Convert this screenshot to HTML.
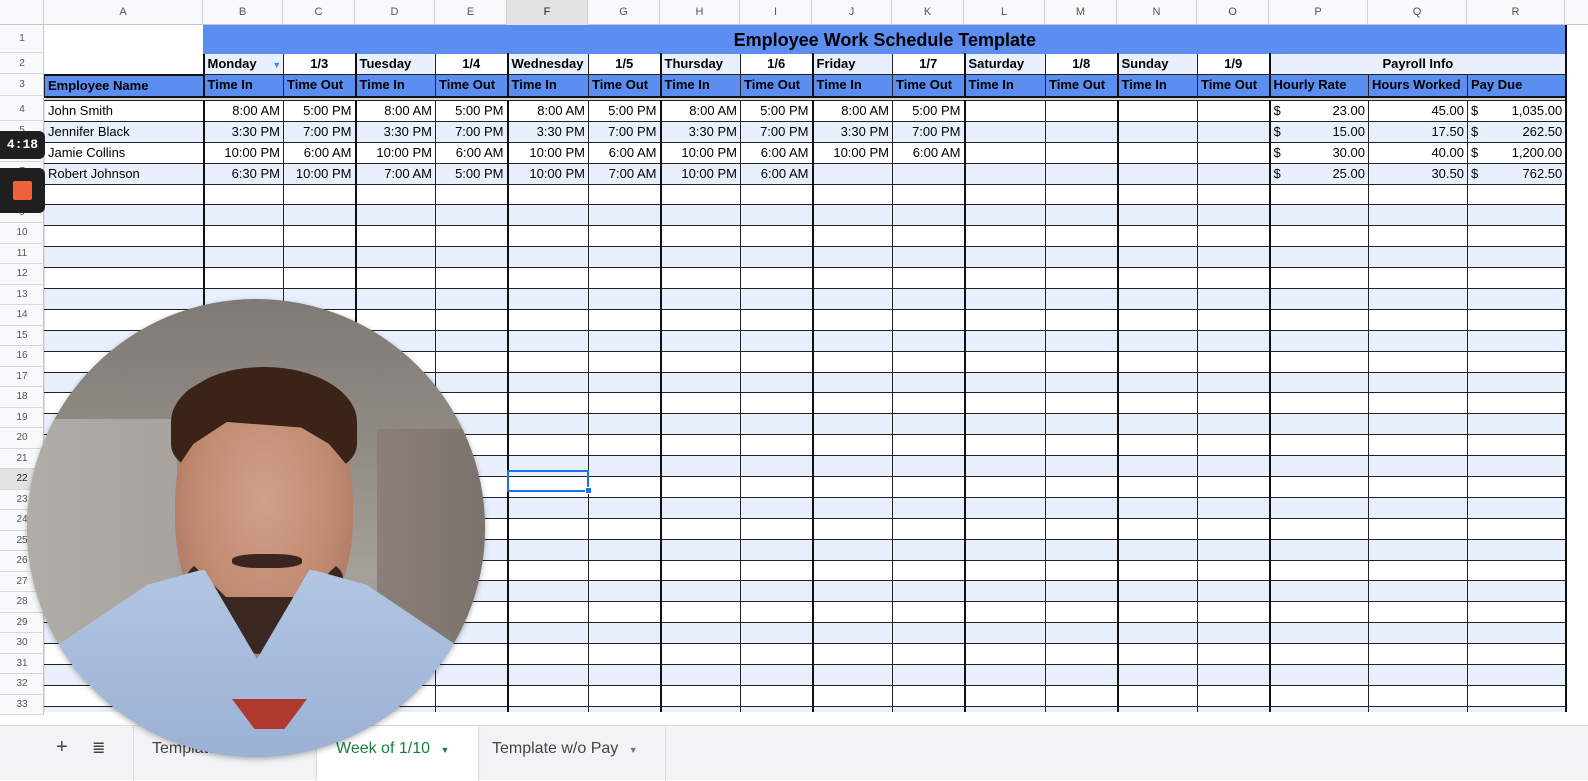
<!DOCTYPE html>
<html><head><meta charset="utf-8"><style>
*{box-sizing:border-box;margin:0;padding:0}
body{width:1588px;height:780px;overflow:hidden;background:#fff;font-family:"Liberation Sans",Arial,sans-serif;position:relative}
#colh{position:absolute;left:0;top:0;height:25px;width:1588px;background:#f8f9fa;border-bottom:1px solid #c7c7c7}
#colh div{position:absolute;top:0;height:25px;line-height:25px;text-align:center;font-size:11px;color:#555;border-right:1px solid #d0d0d0}
#rowh{position:absolute;left:0;top:25px;width:44px;height:690px;background:#f8f9fa;border-right:1px solid #c7c7c7}
#rowh div{position:absolute;left:0;width:44px;text-align:center;font-size:10px;color:#555;border-bottom:1px solid #d8d8d8}
table{position:absolute;left:44px;top:25px;width:1521px;border-collapse:collapse;table-layout:fixed;font-size:13px}
td{border:1px solid #222;padding:0 3px;white-space:nowrap;overflow:hidden;height:20.9px;line-height:18px}
td.r{text-align:right}
td.c{text-align:center}
tr.t td{height:28px;background:#5b8ef0;font-weight:bold;font-size:18px;text-align:center;border-color:#5b8ef0}
tr.d td{height:21px;font-weight:bold;background:#fff}
tr.d td.l{background:#e8f0fe}
tr.h td{height:22px;font-weight:bold;background:#5b8ef0;border-bottom:2px solid #111}
tr.g td{height:4px;background:#d5d5d5;border:none;padding:0}
tr.o td{background:#e8f0fe}
td.k{border-left:2px solid #111}
td.a{border-left:1px solid #ddd}
tr.t td.a0{background:#fff;border:none}
</style></head><body>
<div id="colh">
<div style="left:0;width:44px"></div>
<div style="left:44px;width:159px">A</div><div style="left:203px;width:80px">B</div><div style="left:283px;width:72px">C</div><div style="left:355px;width:80px">D</div><div style="left:435px;width:72px">E</div><div style="left:507px;width:81px;background:#e3e3e3;color:#222">F</div><div style="left:588px;width:72px">G</div><div style="left:660px;width:80px">H</div><div style="left:740px;width:72px">I</div><div style="left:812px;width:80px">J</div><div style="left:892px;width:72px">K</div><div style="left:964px;width:81px">L</div><div style="left:1045px;width:72px">M</div><div style="left:1117px;width:80px">N</div><div style="left:1197px;width:72px">O</div><div style="left:1269px;width:99px">P</div><div style="left:1368px;width:99px">Q</div><div style="left:1467px;width:98px">R</div>
</div>
<div id="rowh">
<div style="top:0;height:28px;line-height:28px">1</div><div style="top:28px;height:21px;line-height:21px">2</div><div style="top:49px;height:22px;line-height:22px">3</div>
<div style="top:75px;height:20.5px;line-height:20px">4</div><div style="top:95.5px;height:20.5px;line-height:20px">5</div><div style="top:116px;height:20.5px;line-height:20px">6</div><div style="top:136.5px;height:20.5px;line-height:20px">7</div><div style="top:157px;height:20.5px;line-height:20px">8</div><div style="top:177.5px;height:20.5px;line-height:20px">9</div><div style="top:198px;height:20.5px;line-height:20px">10</div><div style="top:218.5px;height:20.5px;line-height:20px">11</div><div style="top:239px;height:20.5px;line-height:20px">12</div><div style="top:259.5px;height:20.5px;line-height:20px">13</div><div style="top:280px;height:20.5px;line-height:20px">14</div><div style="top:300.5px;height:20.5px;line-height:20px">15</div><div style="top:321px;height:20.5px;line-height:20px">16</div><div style="top:341.5px;height:20.5px;line-height:20px">17</div><div style="top:362px;height:20.5px;line-height:20px">18</div><div style="top:382.5px;height:20.5px;line-height:20px">19</div><div style="top:403px;height:20.5px;line-height:20px">20</div><div style="top:423.5px;height:20.5px;line-height:20px">21</div><div style="top:444px;height:20.5px;line-height:20px;background:#e3e3e3;color:#222">22</div><div style="top:464.5px;height:20.5px;line-height:20px">23</div><div style="top:485px;height:20.5px;line-height:20px">24</div><div style="top:505.5px;height:20.5px;line-height:20px">25</div><div style="top:526px;height:20.5px;line-height:20px">26</div><div style="top:546.5px;height:20.5px;line-height:20px">27</div><div style="top:567px;height:20.5px;line-height:20px">28</div><div style="top:587.5px;height:20.5px;line-height:20px">29</div><div style="top:608px;height:20.5px;line-height:20px">30</div><div style="top:628.5px;height:20.5px;line-height:20px">31</div><div style="top:649px;height:20.5px;line-height:20px">32</div><div style="top:669.5px;height:20.5px;line-height:20px">33</div>
</div>
<table>
<colgroup><col style="width:159px"><col style="width:80px"><col style="width:72px"><col style="width:80px"><col style="width:72px"><col style="width:81px"><col style="width:72px"><col style="width:80px"><col style="width:72px"><col style="width:80px"><col style="width:72px"><col style="width:81px"><col style="width:72px"><col style="width:80px"><col style="width:72px"><col style="width:99px"><col style="width:99px"><col style="width:98px"></colgroup>
<tr class="t"><td class="a0"></td><td colspan="17" class="k">Employee Work Schedule Template</td></tr>
<tr class="d"><td style="border:none;border-bottom:2px solid #111"></td><td class="k l">Monday <span style="color:#4a86e8;font-size:9px;margin-left:12px">▼</span></td><td class="c">1/3</td><td class="k l">Tuesday</td><td class="c">1/4</td><td class="k l">Wednesday</td><td class="c">1/5</td><td class="k l">Thursday</td><td class="c">1/6</td><td class="k l">Friday</td><td class="c">1/7</td><td class="k l">Saturday</td><td class="c">1/8</td><td class="k l">Sunday</td><td class="c">1/9</td><td colspan="3" class="k l c">Payroll Info</td></tr>
<tr class="h"><td>Employee Name</td><td class="k">Time In</td><td>Time Out</td><td class="k">Time In</td><td>Time Out</td><td class="k">Time In</td><td>Time Out</td><td class="k">Time In</td><td>Time Out</td><td class="k">Time In</td><td>Time Out</td><td class="k">Time In</td><td>Time Out</td><td class="k">Time In</td><td>Time Out</td><td class="k">Hourly Rate</td><td>Hours Worked</td><td>Pay Due</td></tr>
<tr class="g"><td colspan="18"></td></tr>
<tr><td class="a">John Smith</td><td class="k r">8:00 AM</td><td class="r">5:00 PM</td><td class="k r">8:00 AM</td><td class="r">5:00 PM</td><td class="k r">8:00 AM</td><td class="r">5:00 PM</td><td class="k r">8:00 AM</td><td class="r">5:00 PM</td><td class="k r">8:00 AM</td><td class="r">5:00 PM</td><td class="k"></td><td></td><td class="k"></td><td></td><td class="k">$<span style="float:right">23.00</span></td><td class="r">45.00</td><td>$<span style="float:right">1,035.00</span></td></tr>
<tr class="o"><td class="a">Jennifer Black</td><td class="k r">3:30 PM</td><td class="r">7:00 PM</td><td class="k r">3:30 PM</td><td class="r">7:00 PM</td><td class="k r">3:30 PM</td><td class="r">7:00 PM</td><td class="k r">3:30 PM</td><td class="r">7:00 PM</td><td class="k r">3:30 PM</td><td class="r">7:00 PM</td><td class="k"></td><td></td><td class="k"></td><td></td><td class="k">$<span style="float:right">15.00</span></td><td class="r">17.50</td><td>$<span style="float:right">262.50</span></td></tr>
<tr><td class="a">Jamie Collins</td><td class="k r">10:00 PM</td><td class="r">6:00 AM</td><td class="k r">10:00 PM</td><td class="r">6:00 AM</td><td class="k r">10:00 PM</td><td class="r">6:00 AM</td><td class="k r">10:00 PM</td><td class="r">6:00 AM</td><td class="k r">10:00 PM</td><td class="r">6:00 AM</td><td class="k"></td><td></td><td class="k"></td><td></td><td class="k">$<span style="float:right">30.00</span></td><td class="r">40.00</td><td>$<span style="float:right">1,200.00</span></td></tr>
<tr class="o"><td class="a">Robert Johnson</td><td class="k r">6:30 PM</td><td class="r">10:00 PM</td><td class="k r">7:00 AM</td><td class="r">5:00 PM</td><td class="k r">10:00 PM</td><td class="r">7:00 AM</td><td class="k r">10:00 PM</td><td class="r">6:00 AM</td><td class="k"></td><td></td><td class="k"></td><td></td><td class="k"></td><td></td><td class="k">$<span style="float:right">25.00</span></td><td class="r">30.50</td><td>$<span style="float:right">762.50</span></td></tr>
<tr><td class="a"></td><td class="k"></td><td></td><td class="k"></td><td></td><td class="k"></td><td></td><td class="k"></td><td></td><td class="k"></td><td></td><td class="k"></td><td></td><td class="k"></td><td></td><td class="k"></td><td></td><td></td></tr>
<tr class="o"><td class="a"></td><td class="k"></td><td></td><td class="k"></td><td></td><td class="k"></td><td></td><td class="k"></td><td></td><td class="k"></td><td></td><td class="k"></td><td></td><td class="k"></td><td></td><td class="k"></td><td></td><td></td></tr>
<tr><td class="a"></td><td class="k"></td><td></td><td class="k"></td><td></td><td class="k"></td><td></td><td class="k"></td><td></td><td class="k"></td><td></td><td class="k"></td><td></td><td class="k"></td><td></td><td class="k"></td><td></td><td></td></tr>
<tr class="o"><td class="a"></td><td class="k"></td><td></td><td class="k"></td><td></td><td class="k"></td><td></td><td class="k"></td><td></td><td class="k"></td><td></td><td class="k"></td><td></td><td class="k"></td><td></td><td class="k"></td><td></td><td></td></tr>
<tr><td class="a"></td><td class="k"></td><td></td><td class="k"></td><td></td><td class="k"></td><td></td><td class="k"></td><td></td><td class="k"></td><td></td><td class="k"></td><td></td><td class="k"></td><td></td><td class="k"></td><td></td><td></td></tr>
<tr class="o"><td class="a"></td><td class="k"></td><td></td><td class="k"></td><td></td><td class="k"></td><td></td><td class="k"></td><td></td><td class="k"></td><td></td><td class="k"></td><td></td><td class="k"></td><td></td><td class="k"></td><td></td><td></td></tr>
<tr><td class="a"></td><td class="k"></td><td></td><td class="k"></td><td></td><td class="k"></td><td></td><td class="k"></td><td></td><td class="k"></td><td></td><td class="k"></td><td></td><td class="k"></td><td></td><td class="k"></td><td></td><td></td></tr>
<tr class="o"><td class="a"></td><td class="k"></td><td></td><td class="k"></td><td></td><td class="k"></td><td></td><td class="k"></td><td></td><td class="k"></td><td></td><td class="k"></td><td></td><td class="k"></td><td></td><td class="k"></td><td></td><td></td></tr>
<tr><td class="a"></td><td class="k"></td><td></td><td class="k"></td><td></td><td class="k"></td><td></td><td class="k"></td><td></td><td class="k"></td><td></td><td class="k"></td><td></td><td class="k"></td><td></td><td class="k"></td><td></td><td></td></tr>
<tr class="o"><td class="a"></td><td class="k"></td><td></td><td class="k"></td><td></td><td class="k"></td><td></td><td class="k"></td><td></td><td class="k"></td><td></td><td class="k"></td><td></td><td class="k"></td><td></td><td class="k"></td><td></td><td></td></tr>
<tr><td class="a"></td><td class="k"></td><td></td><td class="k"></td><td></td><td class="k"></td><td></td><td class="k"></td><td></td><td class="k"></td><td></td><td class="k"></td><td></td><td class="k"></td><td></td><td class="k"></td><td></td><td></td></tr>
<tr class="o"><td class="a"></td><td class="k"></td><td></td><td class="k"></td><td></td><td class="k"></td><td></td><td class="k"></td><td></td><td class="k"></td><td></td><td class="k"></td><td></td><td class="k"></td><td></td><td class="k"></td><td></td><td></td></tr>
<tr><td class="a"></td><td class="k"></td><td></td><td class="k"></td><td></td><td class="k"></td><td></td><td class="k"></td><td></td><td class="k"></td><td></td><td class="k"></td><td></td><td class="k"></td><td></td><td class="k"></td><td></td><td></td></tr>
<tr class="o"><td class="a"></td><td class="k"></td><td></td><td class="k"></td><td></td><td class="k"></td><td></td><td class="k"></td><td></td><td class="k"></td><td></td><td class="k"></td><td></td><td class="k"></td><td></td><td class="k"></td><td></td><td></td></tr>
<tr><td class="a"></td><td class="k"></td><td></td><td class="k"></td><td></td><td class="k"></td><td></td><td class="k"></td><td></td><td class="k"></td><td></td><td class="k"></td><td></td><td class="k"></td><td></td><td class="k"></td><td></td><td></td></tr>
<tr class="o"><td class="a"></td><td class="k"></td><td></td><td class="k"></td><td></td><td class="k"></td><td></td><td class="k"></td><td></td><td class="k"></td><td></td><td class="k"></td><td></td><td class="k"></td><td></td><td class="k"></td><td></td><td></td></tr>
<tr><td class="a"></td><td class="k"></td><td></td><td class="k"></td><td></td><td class="k"></td><td></td><td class="k"></td><td></td><td class="k"></td><td></td><td class="k"></td><td></td><td class="k"></td><td></td><td class="k"></td><td></td><td></td></tr>
<tr class="o"><td class="a"></td><td class="k"></td><td></td><td class="k"></td><td></td><td class="k"></td><td></td><td class="k"></td><td></td><td class="k"></td><td></td><td class="k"></td><td></td><td class="k"></td><td></td><td class="k"></td><td></td><td></td></tr>
<tr><td class="a"></td><td class="k"></td><td></td><td class="k"></td><td></td><td class="k"></td><td></td><td class="k"></td><td></td><td class="k"></td><td></td><td class="k"></td><td></td><td class="k"></td><td></td><td class="k"></td><td></td><td></td></tr>
<tr class="o"><td class="a"></td><td class="k"></td><td></td><td class="k"></td><td></td><td class="k"></td><td></td><td class="k"></td><td></td><td class="k"></td><td></td><td class="k"></td><td></td><td class="k"></td><td></td><td class="k"></td><td></td><td></td></tr>
<tr><td class="a"></td><td class="k"></td><td></td><td class="k"></td><td></td><td class="k"></td><td></td><td class="k"></td><td></td><td class="k"></td><td></td><td class="k"></td><td></td><td class="k"></td><td></td><td class="k"></td><td></td><td></td></tr>
<tr class="o"><td class="a"></td><td class="k"></td><td></td><td class="k"></td><td></td><td class="k"></td><td></td><td class="k"></td><td></td><td class="k"></td><td></td><td class="k"></td><td></td><td class="k"></td><td></td><td class="k"></td><td></td><td></td></tr>
<tr><td class="a"></td><td class="k"></td><td></td><td class="k"></td><td></td><td class="k"></td><td></td><td class="k"></td><td></td><td class="k"></td><td></td><td class="k"></td><td></td><td class="k"></td><td></td><td class="k"></td><td></td><td></td></tr>
<tr class="o"><td class="a"></td><td class="k"></td><td></td><td class="k"></td><td></td><td class="k"></td><td></td><td class="k"></td><td></td><td class="k"></td><td></td><td class="k"></td><td></td><td class="k"></td><td></td><td class="k"></td><td></td><td></td></tr>
<tr><td class="a"></td><td class="k"></td><td></td><td class="k"></td><td></td><td class="k"></td><td></td><td class="k"></td><td></td><td class="k"></td><td></td><td class="k"></td><td></td><td class="k"></td><td></td><td class="k"></td><td></td><td></td></tr>
<tr class="o"><td class="a"></td><td class="k"></td><td></td><td class="k"></td><td></td><td class="k"></td><td></td><td class="k"></td><td></td><td class="k"></td><td></td><td class="k"></td><td></td><td class="k"></td><td></td><td class="k"></td><td></td><td></td></tr>
</table>
<div style="position:absolute;left:1565px;top:25px;width:23px;height:700px;background:#fff;border-left:2px solid #111"></div>
<div style="position:absolute;left:44px;top:712px;width:1544px;height:13px;background:#fff"></div>
<div style="position:absolute;left:507px;top:470px;width:82px;height:22px;border:2px solid #1a73e8"></div>
<div style="position:absolute;left:585px;top:487px;width:7px;height:7px;background:#1a73e8;border:1px solid #fff"></div>
<div style="position:absolute;left:0;top:725px;width:1588px;height:55px;background:#f1f3f4;border-top:1px solid #ddd">
<div style="position:absolute;left:56px;top:10px;font-size:20px;color:#444">+</div>
<div style="position:absolute;left:92px;top:12px;font-size:16px;color:#444">≣</div>
<div style="position:absolute;left:133px;top:0;width:1px;height:55px;background:#ddd"></div>
<div style="position:absolute;left:152px;top:14px;font-size:16px;color:#444">Template</div>
<div style="position:absolute;left:317px;top:0;width:161px;height:55px;background:#fff;box-shadow:0 1px 3px rgba(0,0,0,.2)"><div style="position:absolute;left:19px;top:14px;font-size:16px;color:#188038">Week of 1/10 <span style="font-size:9px;margin-left:6px">▼</span></div></div>
<div style="position:absolute;left:492px;top:14px;font-size:16px;color:#444">Template w/o Pay <span style="font-size:9px;color:#777;margin-left:6px">▼</span></div>
<div style="position:absolute;left:665px;top:0;width:1px;height:55px;background:#ddd"></div>
</div>
<div style="position:absolute;left:0;top:131px;width:45px;height:28px;background:#1f1f1f;border-radius:0 6px 6px 0;color:#fff;font-weight:bold;font-size:13px;line-height:28px;text-align:center;font-family:'Liberation Mono',monospace">4:18</div>
<div style="position:absolute;left:0;top:168px;width:45px;height:45px;background:#1f1f1f;border-radius:0 6px 6px 0"><div style="position:absolute;left:13px;top:13px;width:19px;height:19px;background:#f0603a;border-radius:2px"></div></div>
<div style="position:absolute;left:27px;top:299px;width:458px;height:458px;border-radius:50%;overflow:hidden;background:linear-gradient(180deg,#7f7a75 0%,#8f8a84 30%,#a5a09a 60%,#8c8680 100%);box-shadow:0 2px 6px rgba(0,0,0,.3)">
<div style="position:absolute;left:0;top:120px;width:150px;height:340px;background:linear-gradient(90deg,#b0aca7,#a8a39e)"></div>
<div style="position:absolute;left:350px;top:130px;width:110px;height:330px;background:linear-gradient(90deg,#8a8079,#7b726b)"></div>
<div style="position:absolute;left:175px;top:250px;width:115px;height:150px;background:#b07e68"></div>
<div style="position:absolute;left:148px;top:80px;width:178px;height:270px;border-radius:46% 46% 48% 48%;background:radial-gradient(ellipse at 50% 45%,#d2a08a 0%,#c08a72 55%,#9d6c58 100%)"></div>
<div style="position:absolute;left:144px;top:68px;width:186px;height:110px;border-radius:50% 50% 30% 30%;background:#3b2318;clip-path:polygon(0 100%,0 30%,30% 0,75% 0,100% 30%,100% 100%,85% 70%,70% 55%,30% 50%,12% 70%)"></div>
<div style="position:absolute;left:160px;top:260px;width:156px;height:95px;border-radius:20% 20% 50% 50%;background:#3a2820;clip-path:polygon(0 0,25% 40%,75% 40%,100% 0,100% 100%,0 100%)"></div>
<div style="position:absolute;left:205px;top:255px;width:70px;height:14px;border-radius:40%;background:#3a261e"></div>
<div style="position:absolute;left:10px;top:270px;width:440px;height:200px;border-radius:45% 45% 0 0;background:linear-gradient(180deg,#b2c6e2,#98b0d4);clip-path:polygon(0 45%,25% 8%,38% 0,50% 45%,62% 0,75% 8%,100% 45%,100% 100%,0 100%)"></div>
<div style="position:absolute;left:205px;top:400px;width:75px;height:30px;background:#b0392f;clip-path:polygon(0 0,100% 0,70% 100%,30% 100%)"></div>
</div>
</body></html>
